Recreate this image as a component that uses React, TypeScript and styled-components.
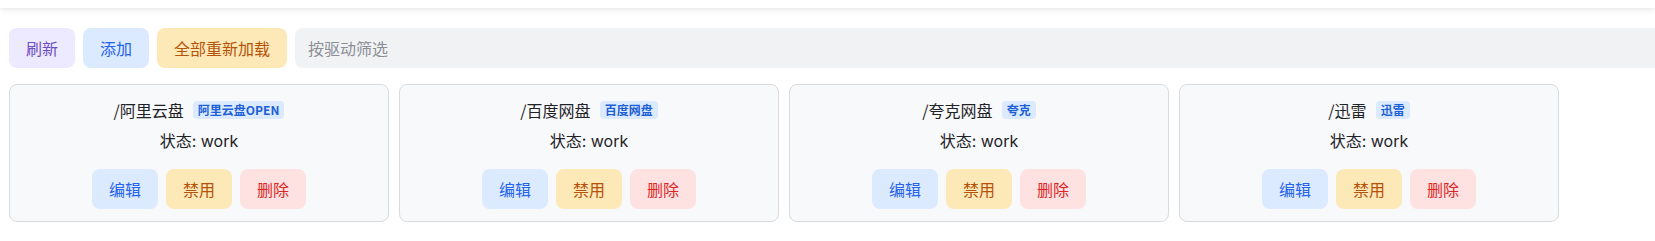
import React from "react";
import styled, { createGlobalStyle } from "styled-components";

const Global = createGlobalStyle`
  html, body { margin: 0; padding: 0; background: #ffffff; overflow: hidden; }
  body { font-family: Inter, "Noto Sans CJK SC", "Noto Sans", sans-serif; color: #1f2328; }
  * { box-sizing: border-box; }
`;

const Header = styled.header`
  height: 8px;
  background: #ffffff;
  box-shadow: 0 1px 6px rgba(0, 0, 0, 0.12);
`;

const Main = styled.main`
  padding: 20px 0 0 9px;
  display: flex;
  flex-direction: column;
  gap: 16px;
`;

const Toolbar = styled.div`
  display: flex;
  align-items: center;
  gap: 8px;
`;

type Tone = "purple" | "blue" | "amber" | "red";

const tones: Record<Tone, { bg: string; fg: string }> = {
  purple: { bg: "#ede9fe", fg: "#6d4fc2" },
  blue: { bg: "#dbeafe", fg: "#2563eb" },
  amber: { bg: "#fde9b8", fg: "#b45309" },
  red: { bg: "#fee2e2", fg: "#dc2626" },
};

const Button = styled.button<{ $tone: Tone }>`
  height: 40px;
  padding: 0 17px;
  border: none;
  border-radius: 8px;
  background: ${(p) => tones[p.$tone].bg};
  color: ${(p) => tones[p.$tone].fg};
  font-family: "Noto Sans CJK SC", sans-serif;
  font-size: 16px;
  line-height: 24px;
  cursor: pointer;
  white-space: nowrap;
`;

const Filter = styled.input`
  flex: 1;
  height: 40px;
  border: none;
  outline: none;
  border-radius: 8px 0 0 8px;
  background: #f1f2f4;
  padding: 0 13px;
  font-family: "Noto Sans CJK SC", sans-serif;
  font-size: 16px;
  color: #374151;
  &::placeholder { color: #8b8f96; }
`;

const Cards = styled.div`
  display: flex;
  flex-wrap: wrap;
  gap: 10px;
`;

const Card = styled.div`
  width: 380px;
  height: 138px;
  background: #f8f9fb;
  border: 1px solid #d8dade;
  border-radius: 8px;
  padding: 12px 12px 12px;
  display: flex;
  flex-direction: column;
  align-items: center;
`;

const TitleRow = styled.div`
  display: flex;
  align-items: center;
  gap: 9px;
  height: 26px;
`;

const Title = styled.span`
  font-family: "Noto Sans CJK SC", sans-serif;
  font-size: 16px;
  line-height: 24px;
  color: #1f2328;
`;

const Badge = styled.span`
  display: inline-flex;
  align-items: center;
  height: 18px;
  padding: 0 5px;
  border-radius: 4px;
  background: #dbeafe;
  color: #1d5fd6;
  font-family: "Noto Sans CJK SC", sans-serif;
  font-weight: 700;
  font-size: 12px;
  line-height: 18px;
`;

const Status = styled.div`
  margin-top: 6px;
  font-family: Inter, "Noto Sans CJK SC", sans-serif;
  font-size: 16px;
  line-height: 24px;
  color: #1f2328;
`;

const Actions = styled.div`
  margin-top: 16px;
  display: flex;
  gap: 8px;
`;

const drives = [
  { path: "/阿里云盘", tag: "阿里云盘OPEN" },
  { path: "/百度网盘", tag: "百度网盘" },
  { path: "/夸克网盘", tag: "夸克" },
  { path: "/迅雷", tag: "迅雷" },
];

export default function App() {
  return (
    <>
      <Global />
      <Header />
      <Main>
        <Toolbar>
          <Button $tone="purple">刷新</Button>
          <Button $tone="blue">添加</Button>
          <Button $tone="amber">全部重新加载</Button>
          <Filter placeholder="按驱动筛选" />
        </Toolbar>
        <Cards>
          {drives.map((d) => (
            <Card key={d.path}>
              <TitleRow>
                <Title>{d.path}</Title>
                <Badge>{d.tag}</Badge>
              </TitleRow>
              <Status>状态: work</Status>
              <Actions>
                <Button $tone="blue">编辑</Button>
                <Button $tone="amber">禁用</Button>
                <Button $tone="red">删除</Button>
              </Actions>
            </Card>
          ))}
        </Cards>
      </Main>
    </>
  );
}
